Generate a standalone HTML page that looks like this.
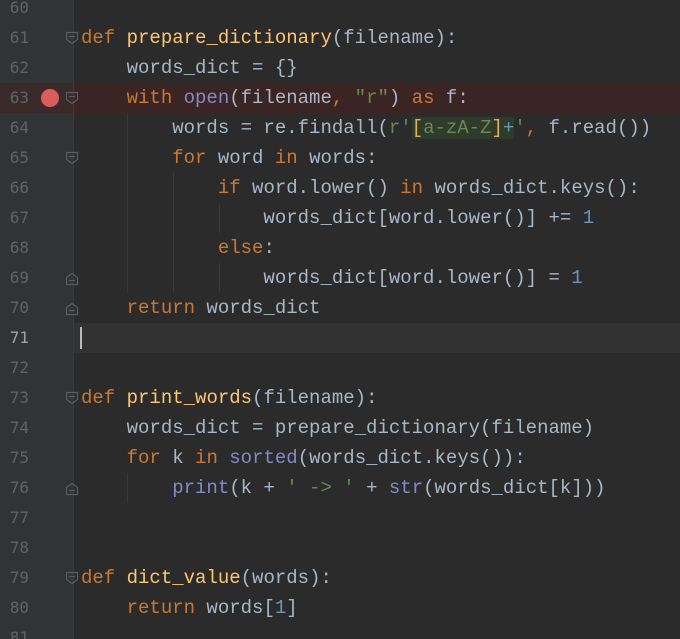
<!DOCTYPE html>
<html><head><meta charset="utf-8"><style>
*{margin:0;padding:0}
html,body{width:680px;height:639px;overflow:hidden}
body{background:#2b2b2b;position:relative;font-family:"DejaVu Sans Mono","Liberation Mono",monospace}
.g{position:absolute;left:0;top:0;width:73px;height:639px;background:#313335;border-right:1px solid #3a3a3a}
.ln{position:absolute;left:0;width:29px;text-align:right;font-size:16px;color:#606366;line-height:30px;font-family:"DejaVu Sans Mono",monospace}
.c{position:absolute;left:81px;font-size:19px;line-height:30px;color:#a9b7c6;white-space:pre;font-family:"Liberation Mono",monospace}
.k{color:#cc7832}.f{color:#ffc66d}.b{color:#8888c6}.s{color:#6a8759}.n{color:#6897bb}
.rx{background:#2f3b2b}
.hl{position:absolute;left:74px;width:606px;height:30px}
.ig{position:absolute;width:1px;background:#393939}
</style></head><body>
<div class="g"></div>
<div class="hl" style="top:83px;background:#3a2424"></div>
<div class="hl" style="top:323px;background:#323232"></div>
<div style="position:absolute;left:0;top:83px;width:73px;height:30px;background:#3a2a2a"></div>
<div style="position:absolute;left:41px;top:89px;width:18px;height:18px;border-radius:50%;background:#db5c5c"></div>
<div style="position:absolute;left:80px;top:327px;width:2px;height:22px;background:#bbb"></div>
<div class="ig" style="left:127px;top:113px;height:180px"></div>
<div class="ig" style="left:173px;top:173px;height:120px"></div>
<div class="ig" style="left:219px;top:203px;height:30px"></div>
<div class="ig" style="left:219px;top:263px;height:30px"></div>
<div class="ig" style="left:127px;top:473px;height:30px"></div>
<svg style="position:absolute;left:0;top:0" width="680" height="639">
<g fill="none" stroke="#5a5d60" stroke-width="1.2">
<path d="M66.5 32.5h11v7l-5.5 4l-5.5-4z M69 36.5h6"/>
<path d="M66.5 92.5h11v7l-5.5 4l-5.5-4z M69 96.5h6"/>
<path d="M66.5 152.5h11v7l-5.5 4l-5.5-4z M69 156.5h6"/>
<path d="M66.5 284.5h11v-7l-5.5-4l-5.5 4z M69 280.5h6"/>
<path d="M66.5 314.5h11v-7l-5.5-4l-5.5 4z M69 310.5h6"/>
<path d="M66.5 392.5h11v7l-5.5 4l-5.5-4z M69 396.5h6"/>
<path d="M66.5 494.5h11v-7l-5.5-4l-5.5 4z M69 490.5h6"/>
<path d="M66.5 572.5h11v7l-5.5 4l-5.5-4z M69 576.5h6"/>
</g></svg>
<div class="ln" style="top:-7px">60</div>
<div class="ln" style="top:23px">61</div>
<div class="ln" style="top:53px">62</div>
<div class="ln" style="top:83px">63</div>
<div class="ln" style="top:113px">64</div>
<div class="ln" style="top:143px">65</div>
<div class="ln" style="top:173px">66</div>
<div class="ln" style="top:203px">67</div>
<div class="ln" style="top:233px">68</div>
<div class="ln" style="top:263px">69</div>
<div class="ln" style="top:293px">70</div>
<div class="ln" style="top:323px;color:#a4a3a3">71</div>
<div class="ln" style="top:353px">72</div>
<div class="ln" style="top:383px">73</div>
<div class="ln" style="top:413px">74</div>
<div class="ln" style="top:443px">75</div>
<div class="ln" style="top:473px">76</div>
<div class="ln" style="top:503px">77</div>
<div class="ln" style="top:533px">78</div>
<div class="ln" style="top:563px">79</div>
<div class="ln" style="top:593px">80</div>
<div class="ln" style="top:623px">81</div>
<div class="c" style="top:23px"><span class="k">def</span> <span class="f">prepare_dictionary</span>(filename):</div>
<div class="c" style="top:53px">    words_dict = {}</div>
<div class="c" style="top:83px">    <span class="k">with</span> <span class="b">open</span>(filename<span class="k">,</span> <span class="s">"r"</span>) <span class="k">as</span> f:</div>
<div class="c" style="top:113px">        words = re.findall(<span class="s">r'</span><span class="rx"><span style="color:#e0b060">[</span><span class="s">a-zA-Z</span><span style="color:#e0b060">]</span><span class="n">+</span></span><span class="s">'</span><span class="k">,</span> f.read())</div>
<div class="c" style="top:143px">        <span class="k">for</span> word <span class="k">in</span> words:</div>
<div class="c" style="top:173px">            <span class="k">if</span> word.lower() <span class="k">in</span> words_dict.keys():</div>
<div class="c" style="top:203px">                words_dict[word.lower()] += <span class="n">1</span></div>
<div class="c" style="top:233px">            <span class="k">else</span>:</div>
<div class="c" style="top:263px">                words_dict[word.lower()] = <span class="n">1</span></div>
<div class="c" style="top:293px">    <span class="k">return</span> words_dict</div>
<div class="c" style="top:383px"><span class="k">def</span> <span class="f">print_words</span>(filename):</div>
<div class="c" style="top:413px">    words_dict = prepare_dictionary(filename)</div>
<div class="c" style="top:443px">    <span class="k">for</span> k <span class="k">in</span> <span class="b">sorted</span>(words_dict.keys()):</div>
<div class="c" style="top:473px">        <span class="b">print</span>(k + <span class="s">' -&gt; '</span> + <span class="b">str</span>(words_dict[k]))</div>
<div class="c" style="top:563px"><span class="k">def</span> <span class="f">dict_value</span>(words):</div>
<div class="c" style="top:593px">    <span class="k">return</span> words[<span class="n">1</span>]</div>
</body></html>
